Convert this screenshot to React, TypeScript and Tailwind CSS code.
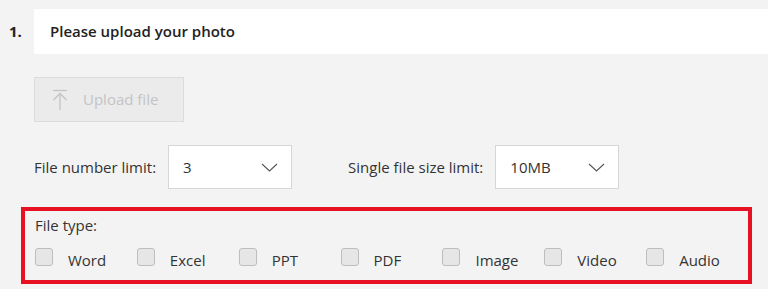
import React from "react";

const types = ["Word", "Excel", "PPT", "PDF", "Image", "Video", "Audio"];

function Chevron() {
  return (
    <svg width="17" height="9" viewBox="0 0 17 9" fill="none">
      <path d="M1 1 L8.5 8 L16 1" stroke="#555" strokeWidth="1.1" />
    </svg>
  );
}

function Select({ value, w }: { value: string; w: string }) {
  return (
    <div className={`${w} h-[44px] bg-white border border-[#d6d6d6] flex items-center justify-between pl-[14px] pr-[13px] text-[#333]`}>
      <span>{value}</span>
      <Chevron />
    </div>
  );
}

export default function App() {
  return (
    <div
      className="w-[768px] h-[289px] bg-[#f3f3f3] overflow-hidden text-[15px] text-[#333]"
      style={{ fontFamily: '"Open Sans", "Noto Sans", sans-serif' }}
    >
      <div className="flex pt-[9px]">
        <div className="w-[34px] h-[45px] flex items-center pl-[9px] font-bold text-[#222]">1.</div>
        <div className="flex-1 h-[45px] bg-white flex items-center pl-[16px] font-semibold text-[#222]">
          Please upload your photo
        </div>
      </div>

      <div className="ml-[34px] mt-[23px] w-[150px] h-[45px] border border-[#dcdcdc] bg-[#ebebeb] flex items-center pl-[17px] text-[#c4c4c4] text-[15px]">
        <svg width="16" height="22" viewBox="0 0 16 22" fill="none" className="mr-[15px]">
          <path d="M1 1.5 H15" stroke="#c4c4c4" strokeWidth="1.3" />
          <path d="M8 4.5 V21" stroke="#c4c4c4" strokeWidth="1.3" />
          <path d="M1.5 11 L8 4.5 L14.5 11" stroke="#c4c4c4" strokeWidth="1.3" />
        </svg>
        <span>Upload file</span>
      </div>

      <div className="ml-[34px] mt-[23px] flex items-center">
        <span>File number limit:</span>
        <div className="ml-[12px]">
          <Select value="3" w="w-[124px]" />
        </div>
        <span className="ml-[56px]">Single file size limit:</span>
        <div className="ml-[12px]">
          <Select value="10MB" w="w-[124px]" />
        </div>
      </div>

      <div className="ml-[21px] mt-[18px] w-[731px] h-[77px] border-[4px] border-[#e81123] pl-[10px] pt-[3px]">
        <div className="h-[22px] flex items-center">File type:</div>
        <div className="flex mt-[12px]">
          {types.map((t) => (
            <div key={t} className="w-[102px] flex items-start">
              <div className="w-[18px] h-[18px] rounded-[3px] border border-[#bdbdbd] bg-[#e6e6e6] shrink-0" />
              <span className="ml-[15px] mt-[2px] leading-[20px]">{t}</span>
            </div>
          ))}
        </div>
      </div>
    </div>
  );
}
